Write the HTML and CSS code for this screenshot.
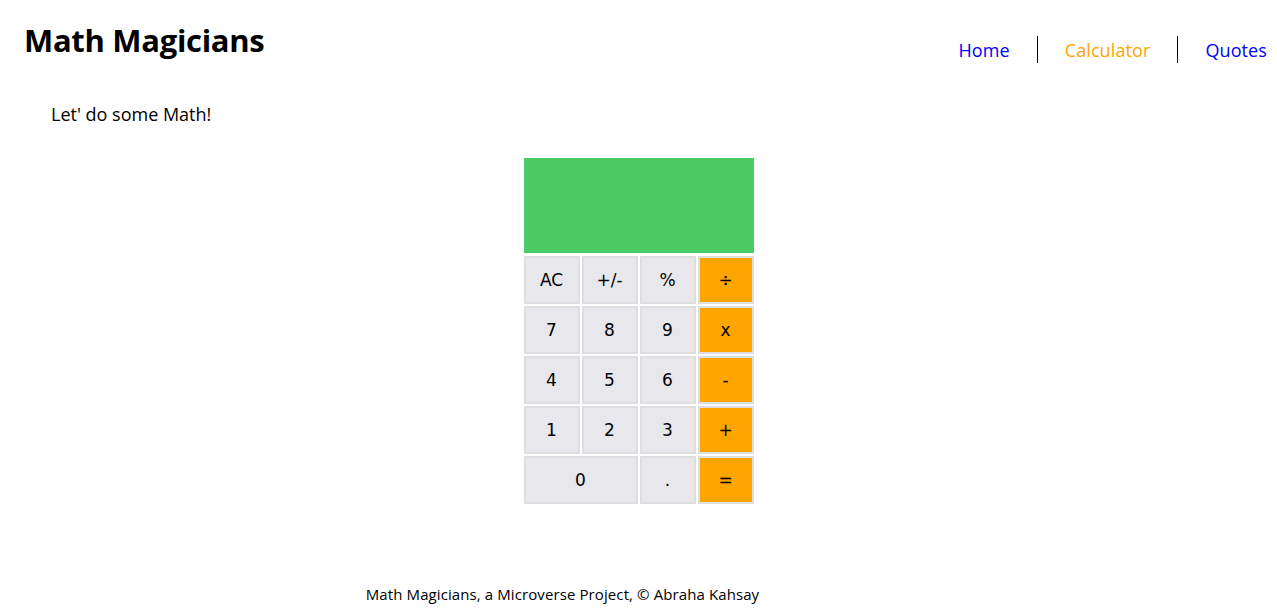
FILE: index.html
```html
<!DOCTYPE html>
<html lang="en">
<head>
  <meta charset="UTF-8" />
  <meta name="viewport" content="width=device-width, initial-scale=1.0"/>
  <title>Math Magicians</title>
  <link rel="stylesheet" href="styles.css">
</head>
<body>
  <header class="header">
    <h1 class="logo">Math Magicians</h1>
    <nav>
      <ul class="nav-list">
        <li><a href="#" class="nav-link">Home</a></li>
        <li><a href="#" class="nav-link active">Calculator</a></li>
        <li><a href="#" class="nav-link">Quotes</a></li>
      </ul>
    </nav>
  </header>

  <main class="page">
    <p class="intro">Let' do some Math!</p>

    <div class="calculator">
      <div class="display"></div>
      <div class="keys">
        <button class="key">AC</button>
        <button class="key">+/-</button>
        <button class="key">%</button>
        <button class="key op">÷</button>
        <button class="key">7</button>
        <button class="key">8</button>
        <button class="key">9</button>
        <button class="key op">x</button>
        <button class="key">4</button>
        <button class="key">5</button>
        <button class="key">6</button>
        <button class="key op">-</button>
        <button class="key">1</button>
        <button class="key">2</button>
        <button class="key">3</button>
        <button class="key op">+</button>
        <button class="key zero">0</button>
        <button class="key">.</button>
        <button class="key op">=</button>
      </div>
    </div>
  </main>

  <footer class="footer">
    Math Magicians, a Microverse Project, © Abraha Kahsay
  </footer>
</body>
</html>
```

FILE: styles.css
```css
body {
  margin: 0;
  padding: 0;
  font-family: "Open Sans", "Noto Sans", sans-serif;
  color: #000;
  background: #fff;
}

.header {
  display: flex;
  justify-content: space-between;
  align-items: flex-start;
  padding: 0 0 0 24px;
}

.logo {
  margin: 19px 0 0;
  font-size: 31px;
  font-weight: 700;
  letter-spacing: -0.3px;
}

.nav-list {
  display: flex;
  list-style: none;
  margin: 36px 0 0;
  padding: 0;
}

.nav-list li {
  padding: 0 27px;
  height: 27px;
  display: flex;
  align-items: center;
}

.nav-list li + li {
  border-left: 1px solid #000;
}

.nav-list li:last-child {
  padding-right: 10px;
}

.nav-link {
  color: #0000ff;
  text-decoration: none;
  font-size: 18px;
  letter-spacing: 0.1px;
}

.nav-link.active {
  color: #ffa500;
}

.intro {
  margin: 39px 0 0 51px;
  font-size: 18px;
}

.calculator {
  width: 230px;
  margin: 32px auto 0;
}

.display {
  height: 95px;
  background: #4bcb63;
  margin-bottom: 3px;
}

.keys {
  display: grid;
  grid-template-columns: repeat(4, 56px);
  grid-auto-rows: 48px;
  gap: 2px;
}

.key {
  font-family: "DejaVu Sans", Verdana, sans-serif;
  font-size: 17px;
  color: #000;
  background: #e8e8ec;
  border: 2px solid #dedee0;
  padding: 0;
  cursor: pointer;
}

.key.op {
  background: #ffa500;
}

.key.zero {
  grid-column: span 2;
}

.footer {
  margin-top: 80px;
  padding-right: 152px;
  text-align: center;
  font-size: 15px;
  letter-spacing: 0.1px;
}
```
